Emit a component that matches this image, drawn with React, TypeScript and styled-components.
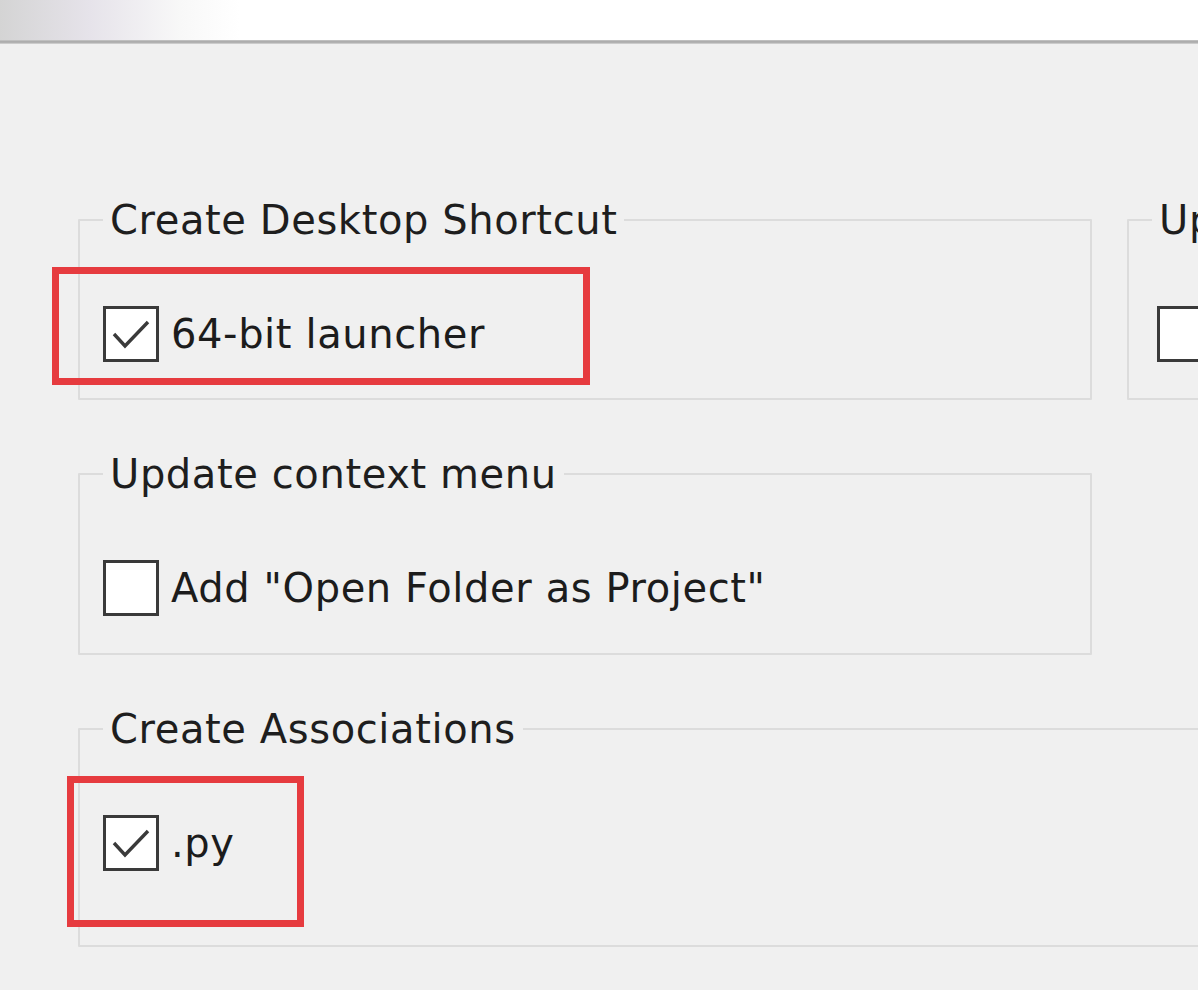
import { createGlobalStyle } from "styled-components";
import styled from "styled-components";

const GlobalStyle = createGlobalStyle`
  html, body {
    margin: 0;
    padding: 0;
    background: #f0f0f0;
    overflow: hidden;
  }
  body {
    font-family: "DejaVu Sans", Tahoma, Verdana, sans-serif;
    color: #1c1c1c;
  }
`;

const Page = styled.div`
  width: 1198px;
  height: 990px;
  display: flex;
  flex-direction: column;
`;

const Header = styled.div`
  height: 40px;
  background: linear-gradient(90deg, #d4d4d4 0px, #e6e3ea 90px, #f8f8f8 180px, #ffffff 240px);
`;

const Separator = styled.div`
  height: 4px;
  background: linear-gradient(180deg, #c8c8c8 0%, #a4a4a4 50%, #d8d8d8 100%);
`;

const Content = styled.div`
  padding: 152px 0 0 78px;
  display: grid;
  grid-template-columns: 1014px 400px;
  column-gap: 35px;
  row-gap: 50px;
  align-items: start;
`;

const Group = styled.fieldset<{ $height: number; $wide?: boolean; $inset?: number }>`
  margin: 0;
  box-sizing: border-box;
  height: ${(p) => p.$height}px;
  min-inline-size: 0;
  border: 2px solid #dcdcdc;
  border-radius: 1px;
  padding: 62px 0 0 ${(p) => p.$inset ?? 23}px;
  grid-column: ${(p) => (p.$wide ? "1 / span 2" : "auto")};
  ${(p) => (p.$wide ? "margin-right: -300px;" : "")}
`;

const Title = styled.legend<{ $shift?: number }>`
  font-size: 40px;
  line-height: 48px;
  padding: 0 7px;
  margin-left: ${(p) => p.$shift ?? 0}px;
  color: #1e1e1e;
  white-space: nowrap;
  letter-spacing: 0.6px;
`;

const Row = styled.label`
  position: relative;
  display: flex;
  align-items: center;
  gap: 12px;
  height: 56px;
  font-size: 40px;
  letter-spacing: 0.6px;
  white-space: nowrap;
`;

const Box = styled.span`
  box-sizing: border-box;
  width: 56px;
  height: 56px;
  flex: none;
  border: 3px solid #3a3a3a;
  background: #ffffff;
  display: flex;
  align-items: center;
  justify-content: center;
`;

const Highlight = styled.span<{ $left: number; $top: number; $w: number; $h: number }>`
  position: absolute;
  left: ${(p) => p.$left}px;
  top: ${(p) => p.$top}px;
  width: ${(p) => p.$w}px;
  height: ${(p) => p.$h}px;
  box-sizing: border-box;
  border: 7px solid #e63b3f;
  pointer-events: none;
`;

type CheckProps = {
  label?: string;
  checked?: boolean;
  highlight?: { left: number; top: number; w: number; h: number };
};

const Check = ({ label, checked, highlight }: CheckProps) => (
  <Row>
    <Box>
      {checked && (
        <svg width="50" height="50" viewBox="0 0 50 50">
          <path d="M8 25 L19 37 L42 13" fill="none" stroke="#3a3a3a" strokeWidth="3.4" />
        </svg>
      )}
    </Box>
    {label && <span>{label}</span>}
    {highlight && (
      <Highlight
        $left={highlight.left}
        $top={highlight.top}
        $w={highlight.w}
        $h={highlight.h}
      />
    )}
  </Row>
);

export default function App() {
  return (
    <Page>
      <GlobalStyle />
      <Header />
      <Separator />
      <Content>
        <Group $height={204}>
          <Title>Create Desktop Shortcut</Title>
          <Check
            label="64-bit launcher"
            checked
            highlight={{ left: -51, top: -39, w: 538, h: 118 }}
          />
        </Group>
        <Group $height={204} $inset={28}>
          <Title $shift={-5}>Update PATH variable (restart needed)</Title>
          <Check label="Add launchers dir to the PATH" />
        </Group>
        <Group $height={205}>
          <Title>Update context menu</Title>
          <Check label='Add "Open Folder as Project"' />
        </Group>
        <div />
        <Group $height={242} $wide>
          <Title>Create Associations</Title>
          <Check
            label=".py"
            checked
            highlight={{ left: -36, top: -39, w: 237, h: 151 }}
          />
        </Group>
      </Content>
    </Page>
  );
}
